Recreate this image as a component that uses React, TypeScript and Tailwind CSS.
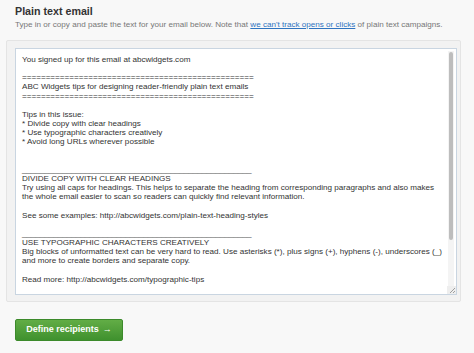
import React from "react";

const lines: string[] = [
  "You signed up for this email at abcwidgets.com",
  "",
  "=================================================",
  "ABC Widgets tips for designing reader-friendly plain text emails",
  "=================================================",
  "",
  "Tips in this issue:",
  "* Divide copy with clear headings",
  "* Use typographic characters creatively",
  "* Avoid long URLs wherever possible",
  "",
  "",
  "___________________________________________________",
  "DIVIDE COPY WITH CLEAR HEADINGS",
  "Try using all caps for headings. This helps to separate the heading from corresponding paragraphs and also makes",
  "the whole email easier to scan so readers can quickly find relevant information.",
  "",
  "See some examples: http://abcwidgets.com/plain-text-heading-styles",
  "",
  "___________________________________________________",
  "USE TYPOGRAPHIC CHARACTERS CREATIVELY",
  "Big blocks of unformatted text can be very hard to read. Use asterisks (*), plus signs (+), hyphens (-), underscores (_)",
  "and more to create borders and separate copy.",
  "",
  "Read more: http://abcwidgets.com/typographic-tips",
  "",
  "",
];

export default function App() {
  return (
    <div
      className="w-[474px] h-[353px] bg-[#f8f8f8] overflow-hidden"
      style={{ fontFamily: '"Liberation Sans", Arial, sans-serif' }}
    >
      <div className="pl-[15px] pt-[5px]">
        <div className="text-[10.7px] leading-[13px] font-bold text-[#333]">Plain text email</div>
        <div className="mt-[2px] text-[8.1px] leading-[10px] text-[#777] whitespace-nowrap">
          Type in or copy and paste the text for your email below. Note that{" "}
          <span className="text-[#2f74c0] underline">we can't track opens or clicks</span> of plain text
          campaigns.
        </div>
      </div>

      <div className="ml-[6px] mt-[10px] w-[455px] bg-[#f2f2f2] border border-[#e4e4e4] rounded-[2px] pl-[8px] pt-[7px] pb-[6px]">
        <div className="relative w-[442px] h-[247px] bg-white border border-[#c9d5e1] overflow-hidden">
          <div className="pl-[6px] pt-[6px] text-[8.1px] leading-[9.17px] text-[#333] whitespace-pre">
            {lines.map((l, i) => (
              <div key={i} className="h-[9.17px]">
                {l}
              </div>
            ))}
          </div>
          <div className="absolute right-[2px] top-[2px] bottom-[8px] w-[6px] bg-[#f4f4f4]">
            <div className="absolute left-[1px] top-[1px] w-[4px] h-[188px] rounded-[2px] bg-[#bdbdbd]" />
          </div>
          <div className="absolute right-0 bottom-0 w-[9px] h-[8px] bg-[#eeeeee]">
            <svg width="9" height="8" viewBox="0 0 9 8">
              <line x1="3" y1="7" x2="8" y2="2" stroke="#8a8a8a" strokeWidth="0.8" />
              <line x1="6" y1="7" x2="8" y2="5" stroke="#8a8a8a" strokeWidth="0.8" />
            </svg>
          </div>
        </div>
      </div>

      <div className="pl-[15px] mt-[17px]">
        <button className="w-[108px] h-[22px] rounded-[2px] border border-[#3c8a2b] bg-gradient-to-b from-[#62ad46] to-[#3f912e] text-white text-[9px] font-bold flex items-center justify-center gap-[4px]">
          <span>Define recipients</span>
          <span className="text-[9px]">→</span>
        </button>
      </div>
    </div>
  );
}
